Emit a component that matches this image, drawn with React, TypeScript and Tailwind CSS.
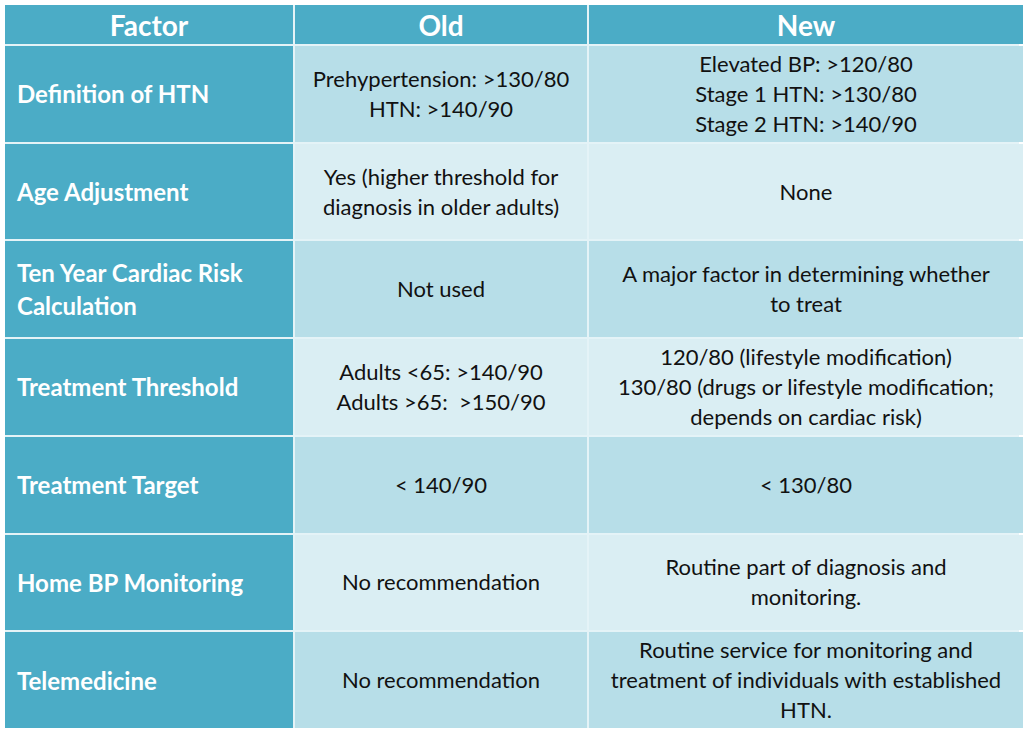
const rows = [
  {
    factor: ["Definition of HTN"],
    old: ["Prehypertension: >130/80", "HTN: >140/90"],
    next: ["Elevated BP: >120/80", "Stage 1 HTN: >130/80", "Stage 2 HTN: >140/90"],
  },
  {
    factor: ["Age Adjustment"],
    old: ["Yes (higher threshold for", "diagnosis in older adults)"],
    next: ["None"],
  },
  {
    factor: ["Ten Year Cardiac Risk", "Calculation"],
    old: ["Not used"],
    next: ["A major factor in determining whether", "to treat"],
  },
  {
    factor: ["Treatment Threshold"],
    old: ["Adults <65: >140/90", "Adults >65:\u00a0 >150/90"],
    next: [
      "120/80 (lifestyle modification)",
      "130/80 (drugs or lifestyle modification;",
      "depends on cardiac risk)",
    ],
  },
  {
    factor: ["Treatment Target"],
    old: ["< 140/90"],
    next: ["< 130/80"],
  },
  {
    factor: ["Home BP Monitoring"],
    old: ["No recommendation"],
    next: ["Routine part of diagnosis and", "monitoring."],
  },
  {
    factor: ["Telemedicine"],
    old: ["No recommendation"],
    next: [
      "Routine service for monitoring and",
      "treatment of individuals with established",
      "HTN.",
    ],
  },
]

function Lines({ lines }: { lines: string[] }) {
  return (
    <>
      {lines.map((l) => (
        <div key={l}>{l}</div>
      ))}
    </>
  )
}

export default function App() {
  return (
    <div className="h-[731px] w-[1024px] bg-white pl-[5px] pt-[5px] font-['Lato','Liberation_Sans',sans-serif]">
      <div className="grid h-[723px] w-[1014px] grid-cols-[288px_292px_434px] grid-rows-[39px_repeat(7,1fr)] gap-[2px] bg-[#e4f3f7]">
        <div className="flex items-center justify-center bg-[#4bacc6] text-[28px] font-bold text-white">
          Factor
        </div>
        <div className="flex items-center justify-center bg-[#4bacc6] text-[28px] font-bold text-white">
          Old
        </div>
        <div className="flex items-center justify-center bg-[#4bacc6] text-[28px] font-bold text-white">
          New
        </div>
        {rows.map((r, i) => {
          const shade = i % 2 === 0 ? "bg-[#b7dee8]" : "bg-[#daeef3]"
          return (
            <div key={r.factor[0]} className="contents">
              <div className="flex flex-col justify-center bg-[#4bacc6] pl-[12px] text-[24px] font-bold leading-[33px] text-white">
                <Lines lines={r.factor} />
              </div>
              <div
                className={`flex flex-col items-center justify-center text-center text-[22px] leading-[30px] text-[#111] ${shade}`}
              >
                <Lines lines={r.old} />
              </div>
              <div
                className={`flex flex-col items-center justify-center text-center text-[22px] leading-[30px] text-[#111] ${shade}`}
              >
                <Lines lines={r.next} />
              </div>
            </div>
          )
        })}
      </div>
    </div>
  )
}
